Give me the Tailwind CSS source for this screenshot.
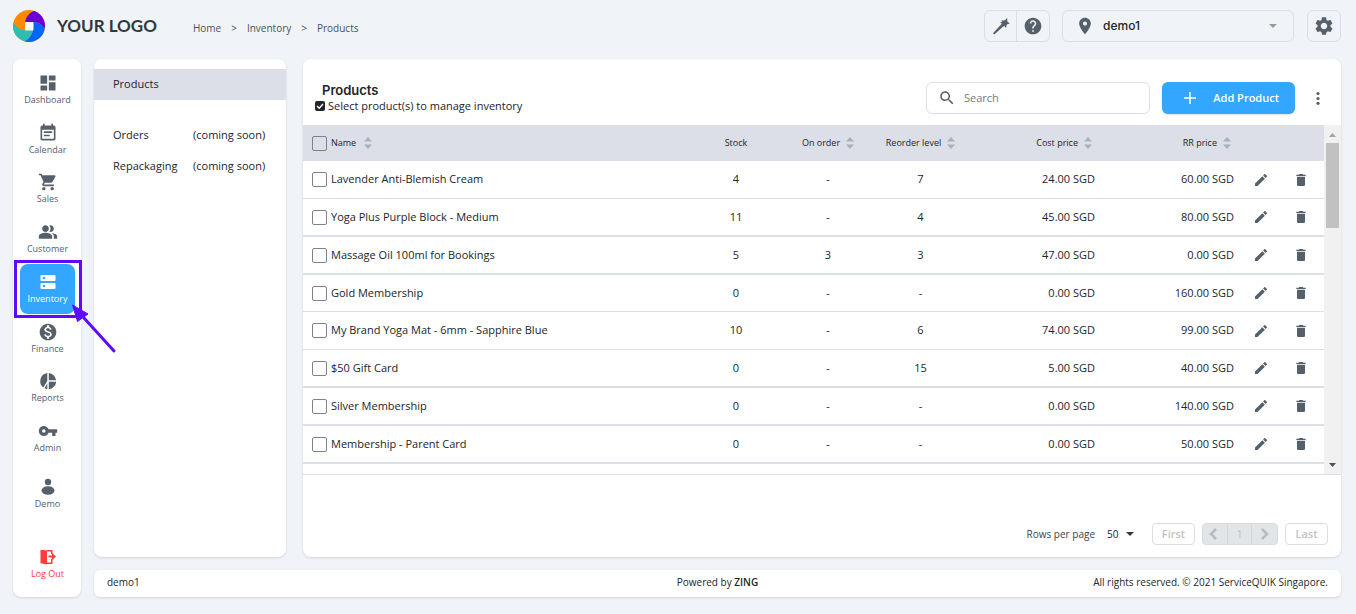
<!DOCTYPE html>
<html lang="en">
<head>
    <meta charset="UTF-8">
    <meta name="viewport" content="width=device-width, initial-scale=1.0">
    <title>Inventory - Products</title>
    <script src="https://cdn.jsdelivr.net/npm/@tailwindcss/browser@4"></script>
</head>
<body class="bg-[#f0f3f8] min-h-screen flex flex-col font-['Open_Sans',sans-serif] text-[#212529]">

    <!-- Top bar -->
    <header class="flex items-start justify-between pl-[13px] pr-[15px] pt-[10px] h-[59px]">
        <div class="flex items-center">
            <a href="#" class="flex items-center gap-3" aria-label="Your logo">
                <svg class="size-8" viewBox="0 0 32 32">
                    <defs><clipPath id="disc"><circle cx="16" cy="16" r="16"/></clipPath></defs>
                    <g clip-path="url(#disc)">
                        <rect width="32" height="32" fill="#ff8a00"/>
                        <path d="M12 12C13 7 16 3 21 1L24 0H32V18H31C28 14 25 12 20 12z" fill="#6a00d0"/>
                        <path d="M20 12C25 12 29 14 32 19V32H11C16 29 19 25 20 20z" fill="#0066ff"/>
                        <path d="M20 20C19 25 16 29 11 32H0V12C3 17 7 20 12 20z" fill="#2ebcb3"/>
                    </g>
                    <rect x="12" y="12" width="8.500" height="8.500" rx="1" fill="#fff"/>
                </svg>
                <span class="font-['Lato',sans-serif] font-bold text-[17px] leading-6 text-[#33383d]">YOUR LOGO</span>
            </a>
            <nav class="flex items-center gap-[10px] ml-9 mt-1 text-[10px] text-[#4c5158]" aria-label="Breadcrumb">
                <a href="#">Home</a><span>&gt;</span>
                <a href="#">Inventory</a><span>&gt;</span>
                <a href="#">Products</a>
            </nav>
        </div>
        <div class="flex text-[#56606b]">
            <div class="flex h-8 border border-[#dcdfe6] rounded-md">
                <button class="w-8 flex items-center justify-center border-r border-[#dcdfe6]" aria-label="Wizard">
                    <svg class="size-[18px]" viewBox="0 0 18 18" fill="currentColor"><path d="M9.500 3.300l3 .3L15.200 1l.1 3.600 2.500 1.900-3 .9-.8 3.600-1.900-2.300L2.300 17.500 1 16.200l8.800-9.400L8 4.900l2.300-.2z"/></svg>
                </button>
                <button class="w-8 flex items-center justify-center" aria-label="Help">
                    <svg class="size-5" viewBox="0 0 24 24" fill="currentColor"><path d="M12 2C6.480 2 2 6.480 2 12s4.480 10 10 10 10-4.480 10-10S17.520 2 12 2zm1 17h-2v-2h2v2zm2.070-7.750l-.9.920C13.450 12.900 13 13.500 13 15h-2v-.5c0-1.100.450-2.100 1.170-2.830l1.240-1.260c.370-.360.590-.860.590-1.410 0-1.100-.9-2-2-2s-2 .9-2 2H8c0-2.210 1.790-4 4-4s4 1.790 4 4c0 .880-.360 1.680-.930 2.250z"/></svg>
                </button>
            </div>
            <button class="ml-3 w-[232px] h-8 flex items-center border border-[#dcdfe6] rounded-md pl-3 pr-4">
                <svg class="size-5" viewBox="0 0 24 24" fill="currentColor"><path d="M12 2C8.130 2 5 5.130 5 9c0 5.250 7 13 7 13s7-7.750 7-13c0-3.870-3.130-7-7-7zm0 9.500c-1.380 0-2.500-1.120-2.500-2.500s1.120-2.500 2.500-2.500 2.500 1.120 2.500 2.500-1.120 2.500-2.500 2.500z"/></svg>
                <span class="ml-2 flex-1 text-left font-['Inter',sans-serif] text-xs font-medium text-[#212529]">demo1</span>
                <svg class="w-2 h-1" viewBox="0 0 8 4" fill="#999"><path d="M0 0h8L4 4z"/></svg>
            </button>
            <button class="ml-[13px] w-[34px] h-8 flex items-center justify-center border border-[#dcdfe6] rounded-md" aria-label="Settings">
                <svg class="size-[18px]" viewBox="2 2 20 20" fill="currentColor"><path d="M19.140 12.940c.040-.3.060-.610.060-.940 0-.320-.020-.640-.070-.940l2.030-1.580c.180-.140.230-.410.120-.610l-1.920-3.320c-.120-.220-.370-.290-.590-.220l-2.390.960c-.5-.380-1.030-.7-1.620-.940l-.360-2.540c-.040-.240-.240-.410-.480-.410h-3.840c-.240 0-.430.170-.470.410l-.360 2.540c-.590.240-1.130.570-1.620.940l-2.390-.960c-.220-.080-.470 0-.590.220L2.740 8.870c-.120.210-.080.470.120.610l2.030 1.580c-.050.3-.090.630-.090.940s.020.640.070.940l-2.030 1.580c-.180.140-.230.410-.120.610l1.920 3.320c.120.220.370.290.590.220l2.390-.960c.5.380 1.030.7 1.620.940l.360 2.540c.050.240.240.410.480.410h3.840c.240 0 .440-.170.470-.410l.360-2.540c.590-.240 1.130-.560 1.620-.940l2.390.960c.220.080.470 0 .590-.220l1.920-3.320c.120-.220.070-.470-.120-.610l-2.010-1.580zM12 15.600c-1.980 0-3.600-1.620-3.600-3.600s1.620-3.600 3.600-3.600 3.600 1.620 3.600 3.600-1.620 3.600-3.600 3.600z"/></svg>
            </button>
        </div>
    </header>

    <div class="flex-1 flex pl-[13px] pr-[15px] pb-[17px]">

        <!-- Sidebar -->
        <nav class="w-[68px] shrink-0 bg-white rounded-lg shadow-sm pt-[6px] pl-px text-[9px] leading-[14px] text-[#56606b]" aria-label="Main">
            <div class="grid grid-rows-8 h-[398px]">
                <a href="#" class="flex flex-col items-center justify-center">
                    <svg class="size-5" viewBox="0 0 24 24" fill="currentColor"><path d="M3 13h8V3H3v10zm0 8h8v-6H3v6zm10 0h8V11h-8v10zm0-18v6h8V3h-8z"/></svg>
                    Dashboard
                </a>
                <a href="#" class="flex flex-col items-center justify-center">
                    <svg class="size-5" viewBox="0 0 24 24" fill="currentColor"><path d="M17 10H7v2h10v-2zm2-7h-1V1h-2v2H8V1H6v2H5c-1.110 0-1.990.9-1.990 2L3 19c0 1.100.890 2 2 2h14c1.100 0 2-.9 2-2V5c0-1.100-.9-2-2-2zm0 16H5V8h14v11zm-5-5H7v2h7v-2z"/></svg>
                    Calendar
                </a>
                <a href="#" class="flex flex-col items-center justify-center">
                    <svg class="size-5" viewBox="0 0 24 24" fill="currentColor"><path d="M7 18c-1.100 0-1.990.9-1.990 2S5.900 22 7 22s2-.9 2-2-.9-2-2-2zM1 2v2h2l3.600 7.590-1.350 2.450c-.160.280-.250.610-.250.960 0 1.100.9 2 2 2h12v-2H7.420c-.140 0-.250-.110-.250-.250l.030-.120.9-1.630h7.450c.750 0 1.410-.410 1.750-1.030l3.580-6.490c.080-.140.120-.310.120-.480 0-.550-.450-1-1-1H5.210l-.940-2H1zm16 16c-1.100 0-1.990.9-1.990 2s.890 2 1.990 2 2-.9 2-2-.9-2-2-2z"/></svg>
                    Sales
                </a>
                <a href="#" class="flex flex-col items-center justify-center">
                    <svg class="size-5" viewBox="0 0 24 24" fill="currentColor"><path d="M16.670 13.130C18.040 14.060 19 15.320 19 17v3h4v-3c0-2.180-3.570-3.470-6.330-3.870zM15 12c2.210 0 4-1.790 4-4s-1.790-4-4-4c-.470 0-.910.1-1.330.240C14.500 5.270 15 6.580 15 8s-.5 2.730-1.330 3.760c.420.140.860.240 1.330.240zM9 12c2.210 0 4-1.790 4-4s-1.790-4-4-4-4 1.790-4 4 1.790 4 4 4zm0 1c-2.670 0-8 1.340-8 4v3h16v-3c0-2.660-5.330-4-8-4z"/></svg>
                    Customer
                </a>
                <a href="#" class="relative mx-[6px] rounded-lg bg-[#33a7ff] text-white flex flex-col items-center justify-center" aria-current="page">
                    <svg class="size-5" viewBox="0 0 20 20"><path d="M3.500 3h13a1 1 0 0 1 1 1v4a1 1 0 0 1-1 1h-13a1 1 0 0 1-1-1V4a1 1 0 0 1 1-1zM3.500 11h13a1 1 0 0 1 1 1v4a1 1 0 0 1-1 1h-13a1 1 0 0 1-1-1v-4a1 1 0 0 1 1-1z" fill="#fff"/><circle cx="6" cy="6" r="1.300" fill="#33a7ff"/><circle cx="6" cy="14" r="1.300" fill="#33a7ff"/></svg>
                    Inventory
                    <!-- Highlight frame and pointer -->
                    <svg class="absolute -left-[6px] -top-1 w-[104px] h-[96px] max-w-none pointer-events-none" viewBox="0 0 104 96">
                        <rect x="1.500" y="1.500" width="65" height="55" fill="none" stroke="#5f0aff" stroke-width="3"/>
                        <path d="M70 58L100 91" stroke="#5f0aff" stroke-width="3" stroke-linecap="round"/>
                        <path d="M58.500 45L74 54L63.500 61.500z" fill="#5f0aff" stroke="#5f0aff"/>
                    </svg>
                </a>
                <a href="#" class="flex flex-col items-center justify-center">
                    <svg class="size-5" viewBox="0 0 24 24" fill="currentColor"><path d="M12 2C6.480 2 2 6.480 2 12s4.480 10 10 10 10-4.480 10-10S17.520 2 12 2zm1.410 16.090V20h-2.670v-1.930c-1.710-.360-3.160-1.460-3.270-3.400h1.960c.1 1.050.820 1.870 2.650 1.870 1.960 0 2.400-.980 2.400-1.590 0-.830-.440-1.610-2.670-2.140-2.480-.6-4.180-1.620-4.180-3.670 0-1.720 1.390-2.840 3.110-3.210V4h2.670v1.950c1.860.450 2.790 1.860 2.850 3.390H14.300c-.050-1.110-.640-1.870-2.220-1.870-1.500 0-2.400.680-2.400 1.640 0 .840.650 1.390 2.670 1.910s4.180 1.390 4.180 3.910c-.010 1.830-1.380 2.830-3.120 3.160z"/></svg>
                    Finance
                </a>
                <a href="#" class="flex flex-col items-center justify-center">
                    <svg class="size-5" viewBox="0 0 20 20" fill="currentColor"><path d="M9.300 2v8L5.300 16.500A8.200 8.200 0 0 1 9.300 2zM10.800 2a8.200 8.200 0 0 1 7.300 7.200h-7.300zM9.300 12.500v5.700a8 8 0 0 1-2.800-.9zM10.800 10.700h7.400a8.200 8.200 0 0 1-7.400 7.500z"/></svg>
                    Reports
                </a>
                <a href="#" class="flex flex-col items-center justify-center">
                    <svg class="size-5" viewBox="0 0 24 24" fill="currentColor"><path d="M12.650 10C11.830 7.670 9.610 6 7 6c-3.310 0-6 2.690-6 6s2.690 6 6 6c2.610 0 4.830-1.670 5.650-4H17v4h4v-4h2v-4H12.650zM7 14c-1.100 0-2-.9-2-2s.9-2 2-2 2 .9 2 2-.9 2-2 2z"/></svg>
                    Admin
                </a>
            </div>
            <a href="#" class="mt-[14px] flex flex-col items-center">
                <svg class="size-5" viewBox="0 0 20 20" fill="currentColor"><circle cx="10" cy="5" r="3.200"/><ellipse cx="10" cy="13.500" rx="6.500" ry="4.300"/></svg>
                Demo
            </a>
            <a href="#" class="mt-9 flex flex-col items-center text-[#ff3b3b]">
                <svg class="size-5" viewBox="0 0 20 20" fill="currentColor"><path d="M2.500 2.800L9 3.500v14l-6.500-1.200zM9 3h5.500v4H13V4.500H9zM9 15.500h4V12h1.500v5H9zM10.500 8.500H14V5.800l4 3.700-4 3.700v-2.700h-3.500z"/></svg>
                Log Out
            </a>
        </nav>

        <div class="flex-1 min-w-0 flex flex-col ml-[13px]">
            <div class="flex-1 flex gap-[17px]">

                <!-- Sub menu -->
                <aside class="w-[192px] shrink-0 bg-white rounded-lg shadow-sm pt-[10px] text-[11px]">
                    <a href="#" class="block h-[31px] leading-[30px] pl-[19px] bg-[#dcdee8] font-medium">Products</a>
                    <div class="pt-[19px] pl-[19px] grid grid-cols-[80px_1fr] leading-[31px]">
                        <a href="#">Orders</a><span>(coming soon)</span>
                        <a href="#">Repackaging</a><span>(coming soon)</span>
                    </div>
                </aside>

                <!-- Products panel -->
                <main class="flex-1 min-w-0 bg-white rounded-lg shadow-sm flex flex-col">
                    <div class="h-[66px] shrink-0 flex justify-between pt-[23px] pl-3 pr-4">
                        <div>
                            <h1 class="pl-[7px] font-['Inter',sans-serif] text-[13px] leading-4 font-semibold">Products</h1>
                            <p class="flex items-center gap-[3px] text-[11px] leading-4">
                                <svg class="size-[10px]" viewBox="0 0 10 10"><rect width="10" height="10" rx="2" fill="#212529"/><path d="M2 5l2.200 2.200L8 3" fill="none" stroke="#fff" stroke-width="1.500"/></svg>
                                Select product(s) to manage inventory
                            </p>
                        </div>
                        <div class="flex items-center h-8">
                            <label class="w-[224px] h-8 flex items-center gap-2 border border-[#dcdee8] rounded-md pl-[11px]">
                                <svg class="size-[18px] text-[#56606b]" viewBox="0 0 24 24" fill="currentColor"><path d="M15.500 14h-.790l-.280-.270C15.410 12.590 16 11.110 16 9.500 16 5.910 13.090 3 9.500 3S3 5.910 3 9.500 5.910 16 9.500 16c1.610 0 3.090-.590 4.230-1.570l.270.280v.790l5 4.990L20.490 19l-4.990-5zm-6 0C7.010 14 5 11.990 5 9.500S7.010 5 9.500 5 14 7.010 14 9.500 11.990 14 9.500 14z"/></svg>
                                <input type="text" placeholder="Search" aria-label="Search" class="flex-1 min-w-0 text-[11px] outline-none placeholder:text-[#757b83]">
                            </label>
                            <button class="ml-3 w-[133px] h-8 flex items-center justify-between rounded-md bg-[#33a7ff] text-white text-[11px] font-semibold pl-[22px] pr-4 shadow-sm">
                                <svg class="size-3" viewBox="0 0 12 12"><path d="M6 0v12M0 6h12" stroke="#fff" stroke-width="1.500"/></svg>
                                Add Product
                            </button>
                            <button class="ml-4 size-[14px]" aria-label="More">
                                <svg class="size-[14px]" viewBox="0 0 14 14" fill="#56606b"><circle cx="7" cy="2.500" r="1.600"/><circle cx="7" cy="7.500" r="1.600"/><circle cx="7" cy="12.300" r="1.600"/></svg>
                            </button>
                        </div>
                    </div>

                    <div class="h-[350px] shrink-0 flex overflow-hidden border-b border-[#dcdee8]">
                        <div class="flex-1 min-w-0 overflow-hidden">
                            <table class="w-full table-fixed border-separate border-spacing-0 text-[11px]">
                                <colgroup>
                                    <col><col class="w-[92px]"><col class="w-[92px]"><col class="w-[93px]"><col class="w-[128px]"><col class="w-[139px]"><col class="w-[54px]"><col class="w-[36px]">
                                </colgroup>
                                <thead class="bg-[#dcdee8] text-[9px]">
                                    <tr class="h-9" id="head-row"></tr>
                                </thead>
                                <tbody id="product-rows"></tbody>
                            </table>
                        </div>
                        <!-- Scroll track -->
                        <div class="w-[17px] bg-[#f1f1f1] flex flex-col items-center justify-between pt-2 pb-1">
                            <div class="flex flex-col items-center gap-[6px]">
                                <svg class="w-[7px] h-1" viewBox="0 0 7 4" fill="#a3a3a3"><path d="M0 4h7L3.500 0z"/></svg>
                                <div class="w-[13px] h-[85px] bg-[#c1c1c1]"></div>
                            </div>
                            <svg class="w-[7px] h-1 mb-[3px]" viewBox="0 0 7 4" fill="#505050"><path d="M0 0h7L3.500 4z"/></svg>
                        </div>
                    </div>

                    <!-- Pagination -->
                    <div class="mt-auto flex items-center justify-end pr-[13px] pb-3 text-[10px] text-[#3c4248]">
                        <label for="per-page">Rows per page</label>
                        <div class="relative ml-3 flex items-center">
                            <select id="per-page" class="appearance-none w-[27px] text-[10px] font-medium text-[#212529]"><option>50</option></select>
                            <svg class="absolute right-0 w-2 h-1 pointer-events-none" viewBox="0 0 8 4" fill="#33383d"><path d="M0 0h8L4 4z"/></svg>
                        </div>
                        <button class="ml-[18px] w-[43px] h-[22px] border border-[#dedede] rounded-sm text-[11px] font-semibold text-[#bfc2c5]" disabled>First</button>
                        <div class="mx-[7px] w-[76px] h-[22px] grid grid-cols-3 border border-[#d9dcde] rounded-sm bg-[#e2e5e8] text-[#bbbdbf] divide-x divide-[#d3d6d8]">
                            <button class="flex items-center justify-center pr-1" aria-label="Previous" disabled><svg class="w-2 h-3" viewBox="0 0 8 12"><path d="M7 1L2 6l5 5" fill="none" stroke="#b9bbbd" stroke-width="2.500"/></svg></button>
                            <button class="text-[10px]" disabled>1</button>
                            <button class="flex items-center justify-center" aria-label="Next" disabled><svg class="w-2 h-3" viewBox="0 0 8 12"><path d="M1 1l5 5-5 5" fill="none" stroke="#b9bbbd" stroke-width="2.500"/></svg></button>
                        </div>
                        <button class="w-[43px] h-[22px] border border-[#dedede] rounded-sm text-[11px] font-semibold text-[#bfc2c5]" disabled>Last</button>
                    </div>
                </main>
            </div>

            <footer class="mt-[13px] h-[27px] grid grid-cols-3 items-center px-[13px] pb-[2px] bg-white rounded-md shadow-sm text-[10px]">
                <span>demo1</span>
                <span class="text-center">Powered by <b class="font-semibold">ZING</b></span>
                <span class="text-right">All rights reserved. © 2021 ServiceQUIK Singapore.</span>
            </footer>
        </div>
    </div>

    <script>
        const products = [
            ['Lavender Anti-Blemish Cream', '4', '-', '7', '24.00', '60.00'],
            ['Yoga Plus Purple Block - Medium', '11', '-', '4', '45.00', '80.00'],
            ['Massage Oil 100ml for Bookings', '5', '3', '3', '47.00', '0.00'],
            ['Gold Membership', '0', '-', '-', '0.00', '160.00'],
            ['My Brand Yoga Mat - 6mm - Sapphire Blue', '10', '-', '6', '74.00', '99.00'],
            ['$50 Gift Card', '0', '-', '15', '5.00', '40.00'],
            ['Silver Membership', '0', '-', '-', '0.00', '140.00'],
            ['Membership - Parent Card', '0', '-', '-', '0.00', '50.00'],
        ];
        // divider and height of each row
        const rowStyle = i => {
            if (i === 3) return 'h-[37px] *:border-b';
            return i === 0 || i === 4 ? 'h-[38px] *:border-b' : 'h-[38px] *:border-b-2';
        };

        const sortIcon = '<svg class="w-2 h-3 shrink-0" viewBox="0 0 8 12" fill="#a9b0ba"><path d="M0 4.500h8L4 0zM0 7.500h8L4 12z"/></svg>';
        const checkbox = label => `<input type="checkbox" aria-label="${label}" class="appearance-none size-[15px] shrink-0 border border-[#7d828a] rounded-[2px]">`;

        document.getElementById('head-row').innerHTML = `
            <th class="p-0 pl-[9px] font-medium"><div class="flex items-center gap-1">${checkbox('Select all')}Name<span class="w-0"></span>${sortIcon}</div></th>
            <th class="p-0 font-medium">Stock</th>
            <th class="p-0 font-medium"><div class="flex items-center justify-center gap-[6px]">On order ${sortIcon}</div></th>
            <th class="p-0 font-medium"><div class="flex items-center justify-center gap-[6px]">Reorder level ${sortIcon}</div></th>
            <th class="p-0 pr-[3px] font-medium"><div class="flex items-center justify-end gap-[6px]">Cost price ${sortIcon}</div></th>
            <th class="p-0 pr-[3px] font-medium"><div class="flex items-center justify-end gap-[6px]">RR price ${sortIcon}</div></th>
            <th class="p-0"></th>
            <th class="p-0"></th>`;

        document.getElementById('product-rows').innerHTML = products.map((p, i) => `
            <tr class="${rowStyle(i)} *:border-[#dcdee8]">
                <td class="p-0 pl-[9px]"><div class="flex items-center gap-1">${checkbox(p[0])}${p[0]}</div></td>
                <td class="p-0 text-center">${p[1]}</td>
                <td class="p-0 text-center">${p[2]}</td>
                <td class="p-0 text-center">${p[3]}</td>
                <td class="p-0 text-right">${p[4]} SGD</td>
                <td class="p-0 text-right">${p[5]} SGD</td>
                <td class="p-0"><button class="mx-auto block" aria-label="Edit"><svg class="size-4" viewBox="0 0 24 24" fill="#56606b"><path d="M3 17.250V21h3.750L17.810 9.940l-3.750-3.750L3 17.250zM20.710 7.040c.390-.390.390-1.020 0-1.410l-2.340-2.340c-.390-.390-1.020-.390-1.410 0l-1.830 1.830 3.750 3.750 1.830-1.830z"/></svg></button></td>
                <td class="p-0 pl-[5px]"><button class="block" aria-label="Delete"><svg class="size-4" viewBox="0 0 24 24" fill="#56606b"><path d="M6 19c0 1.100.9 2 2 2h8c1.100 0 2-.9 2-2V7H6v12zM19 4h-3.500l-1-1h-5l-1 1H5v2h14V4z"/></svg></button></td>
            </tr>`).join('');
    </script>
</body>
</html>
